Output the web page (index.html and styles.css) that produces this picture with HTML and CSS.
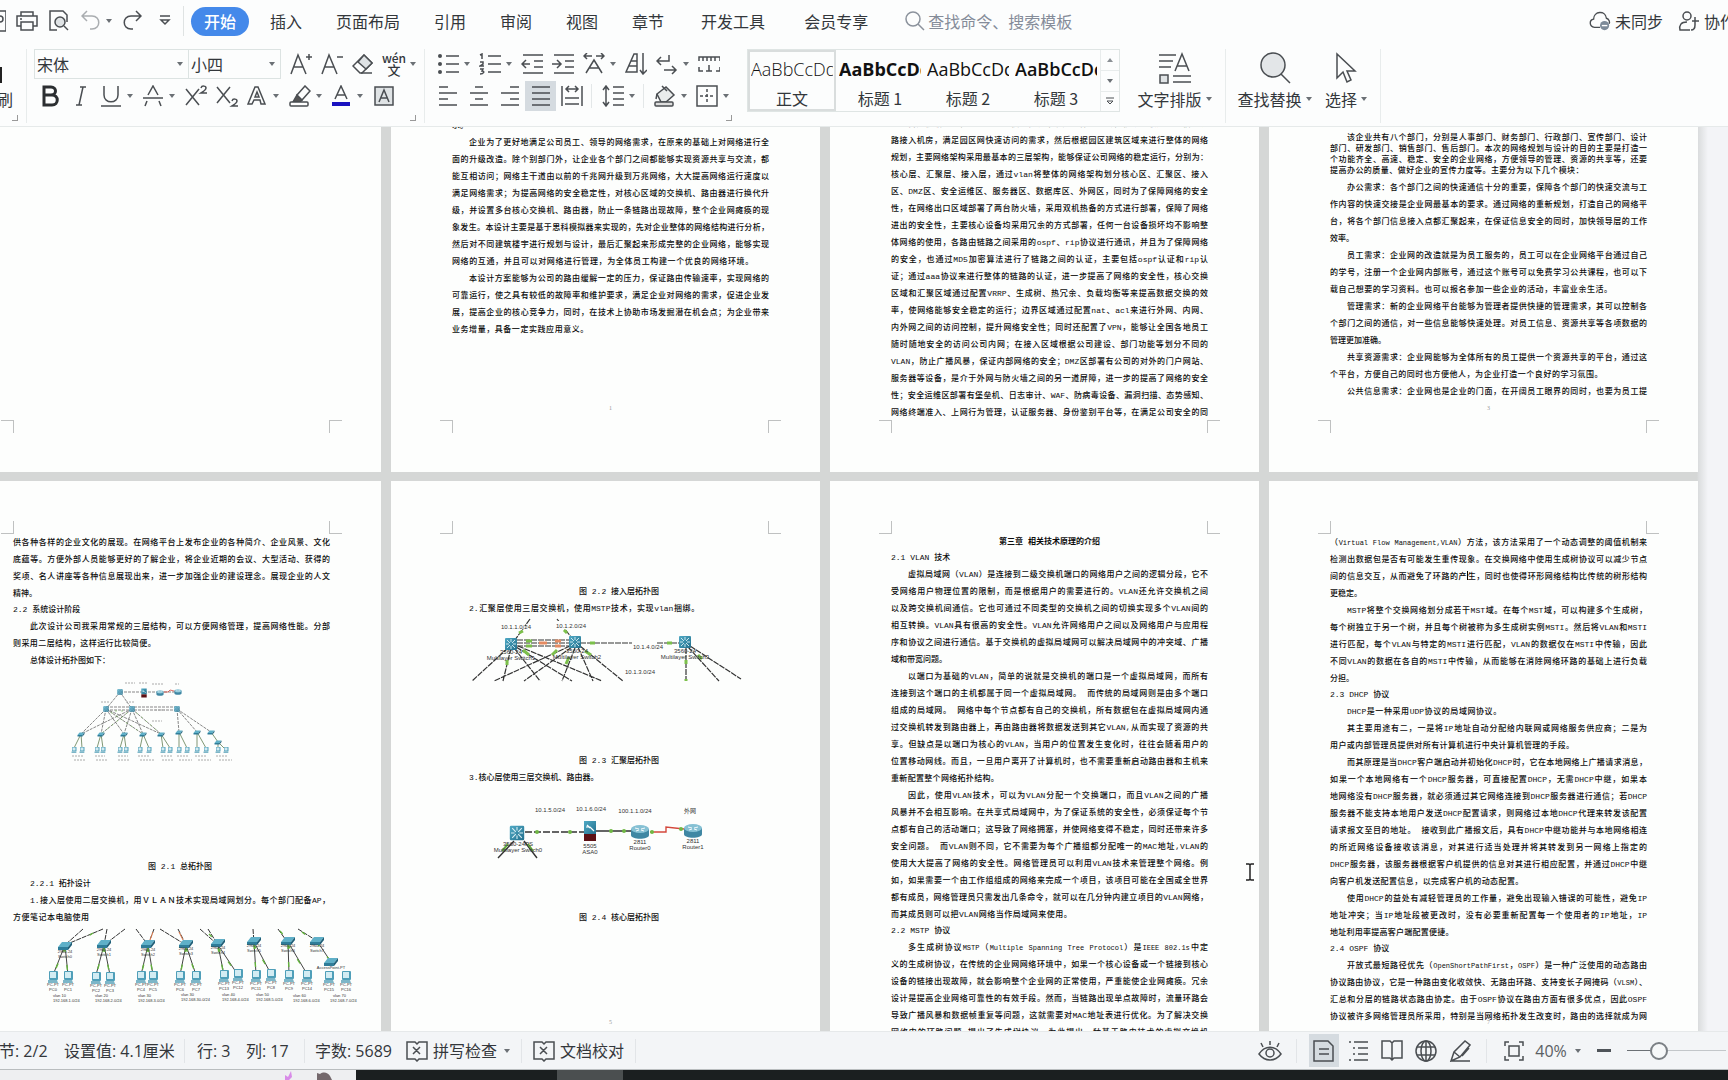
FILE: index.html
```html
<!DOCTYPE html>
<html lang="zh-CN">
<head>
<meta charset="utf-8">
<title>文字文稿</title>
<link rel="stylesheet" href="styles.css">
</head>
<body>
<svg class="defs" aria-hidden="true">
  <defs>
    <linearGradient id="teal" x1="0" y1="0" x2="1" y2="1"><stop offset="0" stop-color="#4fa9c4"/><stop offset="1" stop-color="#24718e"/></linearGradient>
    <g id="mls"><rect x="-6" y="-6" width="12" height="12" rx="1" fill="url(#teal)"/><path d="M-4-4l3 3M4-4l-3 3M-4 4l3-3M4 4l-3-3M0-5v3M0 5v-3M-5 0h3M5 0h-3" stroke="#d9eef4" stroke-width=".9"/></g>
    <g id="sw"><path d="M-7 2l4-5h10l-4 5z" fill="#5fb0c8"/><path d="M-7 2h10v3h-10z" fill="#2f7d99"/><path d="M3 2l4-5v3l-4 5z" fill="#1f5f78"/></g>
    <g id="pc"><rect x="-4" y="-6" width="9" height="9" rx="1" fill="#4f9fb9"/><rect x="-3" y="-5" width="6" height="6" fill="#d3ecf3"/><path d="M-5 3h9l1 3h-10z" fill="#7db6c8"/></g>
    <g id="rt"><path d="M-9-3v6c0 5 18 5 18 0v-6z" fill="#3f87a3"/><ellipse cy="-3" rx="9" ry="4" fill="#86c1d4"/><path d="M-5-4l4 1M5-4l-4 1M-4-1l3-1M4-1l-3-1" stroke="#fff" stroke-width=".9"/></g>
    <g id="fw"><rect x="-6" y="-10" width="12" height="13" fill="url(#teal)"/><rect x="-6" y="3" width="12" height="7" fill="#5c1014"/><path d="M-4-4h4l4 4M-3-6l3 3" stroke="#fff" stroke-width="1.2" fill="none"/></g>
  </defs>
</svg>
<div class="app">
  <header class="tabs">
    <div class="quick">
      <button class="q cut" aria-label="保存"><svg width="8" height="22" viewBox="0 0 8 22"><path d="M0 1h6v20H0M0 6c4 0 4 6 0 6"/></svg></button>
      <button class="q" aria-label="打印"><svg width="22" height="22" viewBox="0 0 22 22"><path d="M5 6V2h12v4M5 16H1V6h20v10h-4M5 12h12v8H5zM4 9h2"/></svg></button>
      <button class="q" aria-label="预览"><svg width="22" height="22" viewBox="0 0 22 22"><path d="M9 20H2V1h13l4 4v7"/><circle cx="12" cy="12" r="5" fill="#dfe3e5"/><path d="M16 16l4 4"/></svg></button>
      <button class="q undo" aria-label="撤销"><svg width="20" height="22" viewBox="0 0 20 22"><path d="M6 1L1 6l5 5M1 6h10c9 0 9 13 0 13h-2"/></svg><i class="caret"></i></button>
      <button class="q redo" aria-label="恢复"><svg width="20" height="22" viewBox="0 0 20 22"><path d="M14 1l5 5-5 5M19 6H9c-9 0-9 13 0 13h2"/></svg></button>
      <button class="q" aria-label="更多"><svg width="12" height="12" viewBox="0 0 12 12"><path d="M1 1h10M2 5h8l-4 4z"/></svg></button>
    </div>
    <nav class="menu">
      <button class="tab on">开始</button><button class="tab">插入</button><button class="tab">页面布局</button><button class="tab">引用</button><button class="tab">审阅</button><button class="tab">视图</button><button class="tab">章节</button><button class="tab wide">开发工具</button><button class="tab wide">会员专享</button>
    </nav>
    <label class="search"><svg width="20" height="20" viewBox="0 0 20 20"><circle cx="8" cy="8" r="7"/><path d="M13 13l6 6"/></svg><input type="text" placeholder="查找命令、搜索模板" aria-label="查找命令"></label>
    <div class="account">
      <button><svg width="22" height="22" viewBox="0 0 24 22"><path d="M12 18H6C0 17 0 10 5 9c0-9 13-10 14-1 3 1 4 4 3 6"/><circle cx="17" cy="16" r="5" fill="#7d8b99" stroke="none"/><path d="M14 16h6" stroke="#fff"/></svg>未同步</button>
      <button><svg width="22" height="20" viewBox="0 0 22 20"><circle cx="9" cy="5" r="4"/><path d="M12 19H2c-1-5 1-8 7-8M14 10h7M17 6v8c0 3-1 5-4 5"/></svg>协作</button>
    </div>
  </header>

  <section class="ribbon">
    <div class="group clip">
      <div class="brush"><span class="stub"></span><span>刷</span></div><i class="launch"></i>
    </div>
    <div class="group font">
      <div class="row">
        <div class="combo">
          <label class="pick face"><select aria-label="字体"><option>宋体</option></select><i class="caret"></i></label>
          <label class="pick size"><select aria-label="字号"><option>小四</option></select><i class="caret"></i></label>
        </div>
        <button class="b" aria-label="增大字号"><svg width="22" height="22" viewBox="0 0 22 22"><path d="M1 21L8 2l8 19M4 14h9M16 4h6M19 1v6"/></svg></button>
        <button class="b" aria-label="减小字号"><svg width="22" height="22" viewBox="0 0 22 22"><path d="M1 21L8 2l8 19M4 14h9M16 4h6"/></svg></button>
        <button class="b" aria-label="清除格式"><svg width="22" height="22" viewBox="0 0 22 22"><path d="M1 13L12 2l8 8-10 10H8z"/><path d="M6 9l8 7 6-6-8-8z" fill="#dfe3e5"/><path d="M9 20h11"/></svg></button>
        <button class="b c wen" aria-label="拼音指南"><span><small>wén</small><b>文</b></span><i class="caret"></i></button>
      </div>
      <div class="row">
        <button class="b" aria-label="加粗"><svg width="20" height="22" viewBox="0 0 20 22"><path class="thick" d="M4 2h7c6 0 6 8 0 8H4zM4 10h8c7 0 7 10 0 10H4z"/></svg></button>
        <button class="b" aria-label="倾斜"><svg width="20" height="22" viewBox="0 0 20 22"><path d="M9 2h6M5 20h6M12 2L8 20"/></svg></button>
        <button class="b c" aria-label="下划线"><svg width="20" height="22" viewBox="0 0 20 22"><path d="M3 1v9c0 9 14 9 14 0V1M0 21h20"/></svg><i class="caret"></i></button>
        <button class="b c" aria-label="删除线"><svg width="20" height="22" viewBox="0 0 20 22"><path d="M5 10l5-9 5 9M0 13h20M4 16l-2 5M16 16l2 5"/></svg><i class="caret"></i></button>
        <button class="b" aria-label="上标"><svg width="22" height="22" viewBox="0 0 22 22"><path d="M1 4l13 16M14 4L1 20M16 3c1-3 5-2 5 0 0 2-5 5-5 5h6"/></svg></button>
        <button class="b" aria-label="下标"><svg width="22" height="22" viewBox="0 0 22 22"><path d="M1 2l13 16M14 2L1 18M16 16c1-3 5-2 5 0 0 2-5 5-5 5h6"/></svg></button>
        <button class="b c" aria-label="文字效果"><svg width="20" height="22" viewBox="0 0 20 22"><path d="M1 19L8 2h3l7 17h-4l-1-4H7l-2 4zM8 12h4l-2-5z"/></svg><i class="caret"></i></button>
        <button class="b c" aria-label="突出显示"><svg width="22" height="22" viewBox="0 0 22 22"><path d="M8 10l8-9 5 5-8 9-5 1z"/><path d="M8 10l5 5-2 2H4z" fill="#555"/><rect x="1" y="17" width="18" height="4" rx="1" fill="#fff"/></svg><i class="caret"></i></button>
        <button class="b c" aria-label="字体颜色"><svg width="20" height="22" viewBox="0 0 20 22"><path d="M4 14l6-13 6 13M6 10h8"/><path d="M1 19h18" stroke="#1a12c0" stroke-width="4"/></svg><i class="caret"></i></button>
        <button class="b" aria-label="字符底纹"><svg width="20" height="22" viewBox="0 0 20 22"><rect x="1" y="2" width="18" height="18" fill="#dfe3e5"/><path d="M5 17l5-12 5 12M7 13h6"/></svg></button>
      </div>
      <i class="launch"></i>
    </div>
    <div class="group para">
      <div class="row">
        <button class="b c" aria-label="项目符号"><svg width="22" height="22" viewBox="0 0 22 22"><path d="M9 3h13M9 11h13M9 19h13"/><g fill="#4a4e52" stroke="none"><circle cx="3" cy="3" r="2"/><circle cx="3" cy="11" r="2"/><circle cx="3" cy="19" r="2"/></g></svg><i class="caret"></i></button>
        <button class="b c" aria-label="编号"><svg width="22" height="22" viewBox="0 0 22 22"><path d="M9 3h13M9 11h13M9 19h13M1 2l2-1v5M1 9h3v2L1 13h4M1 16h3l-1 2c3 0 2 3-2 3"/></svg><i class="caret"></i></button>
        <button class="b" aria-label="减少缩进"><svg width="22" height="22" viewBox="0 0 22 22"><path d="M2 2h20M13 8h9M13 14h9M2 20h20M9 11H1M5 7l-4 4 4 4"/></svg></button>
        <button class="b" aria-label="增加缩进"><svg width="22" height="22" viewBox="0 0 22 22"><path d="M2 2h20M13 8h9M13 14h9M2 20h20M0 11h8M5 7l4 4-4 4"/></svg></button>
        <button class="b c" aria-label="中文版式"><svg width="22" height="22" viewBox="0 0 22 22"><path d="M3 20l8-13 8 13M6 15h10M9 3H1M4 0L1 3l3 3M13 3h8M18 0l3 3-3 3"/></svg><i class="caret"></i></button>
        <button class="b" aria-label="排序"><svg width="22" height="22" viewBox="0 0 22 22"><path d="M1 19L9 1h3v18zM6 8h6M4 13h8M18 0v20M15 17l3 4 4-4"/></svg></button>
        <button class="b c" aria-label="显示标记"><svg width="22" height="22" viewBox="0 0 22 22"><path d="M13 2v6H2M5 4L1 8l4 4M8 17h11M16 13l4 4-4 4"/></svg><i class="caret"></i></button>
        <button class="b" aria-label="制表位"><svg width="22" height="22" viewBox="0 0 22 22"><path d="M1 8V4h21v4M5 4v4M9 4v4M13 4v4M17 4v4M1 14v4h4M22 14v4h-4M11 12v6M8 18h6"/></svg></button>
      </div>
      <div class="row">
        <button class="b" aria-label="左对齐"><svg width="20" height="22" viewBox="0 0 20 22"><path d="M1 2h9M1 8h18M1 14h9M1 20h18"/></svg></button>
        <button class="b" aria-label="居中"><svg width="20" height="22" viewBox="0 0 20 22"><path d="M6 2h8M1 8h18M6 14h8M1 20h18"/></svg></button>
        <button class="b" aria-label="右对齐"><svg width="20" height="22" viewBox="0 0 20 22"><path d="M10 2h9M1 8h18M10 14h9M1 20h18"/></svg></button>
        <button class="b active" aria-label="两端对齐"><svg width="20" height="22" viewBox="0 0 20 22"><path d="M1 2h18M1 8h18M1 14h18M1 20h18"/></svg></button>
        <button class="b" aria-label="分散对齐"><svg width="22" height="22" viewBox="0 0 22 22"><path d="M1 1v20M21 1v20M5 4h12M8 1L5 4l3 3M14 1l3 3-3 3M4 13h14M4 19h14"/></svg></button>
        <i class="bar"></i>
        <button class="b c" aria-label="行距"><svg width="22" height="22" viewBox="0 0 22 22"><path d="M4 1v20M1 5l3-4 3 4M1 17l3 4 3-4M11 2h11M11 8h11M11 14h11M11 20h11"/></svg><i class="caret"></i></button>
        <i class="bar"></i>
        <button class="b c" aria-label="底纹"><svg width="22" height="22" viewBox="0 0 22 22"><path d="M3 9l9-7 8 8-8 7H7z" fill="#e9ecec"/><path d="M8 1l5 5M3 9l-1 5"/><rect x="1" y="17" width="18" height="4" rx="1" fill="#ddd"/></svg><i class="caret"></i></button>
        <button class="b c" aria-label="边框"><svg width="22" height="22" viewBox="0 0 22 22"><rect x="1" y="1" width="20" height="20"/><path d="M11 4v14M4 11h14" stroke-dasharray="3 2"/></svg><i class="caret"></i></button>
      </div>
      <i class="launch"></i>
    </div>
    <div class="gallery">
      <button class="style sel"><span class="s0">AaBbCcDd</span><em>正文</em></button>
      <button class="style"><span class="s1">AaBbCcDd</span><em>标题 1</em></button>
      <button class="style"><span class="s2">AaBbCcDd</span><em>标题 2</em></button>
      <button class="style"><span class="s3">AaBbCcDd</span><em>标题 3</em></button>
      <div class="scroll"><button aria-label="上一行"><i class="caret up"></i></button><button aria-label="下一行"><i class="caret"></i></button><button aria-label="更多样式"><svg width="8" height="8" viewBox="0 0 8 8"><path d="M0 1h8M1 4h6L4 7z"/></svg></button></div>
    </div>
    <div class="group big">
      <button><svg width="32" height="32" viewBox="0 0 32 32"><path d="M0 3h17M0 9h14M0 15h12M16 19L23 2l7 17M18 14h10M14 24h18M14 30h18"/><rect x="1" y="23" width="8" height="8" fill="#dfe3e5"/></svg><span>文字排版<i class="caret"></i></span></button>
    </div>
    <div class="group big">
      <button><svg width="32" height="32" viewBox="0 0 32 32"><circle cx="14" cy="13" r="12" fill="#e3e6e8"/><path d="M22 22l9 9"/></svg><span>查找替换<i class="caret"></i></span></button>
      <button class="narrow"><svg width="22" height="32" viewBox="0 0 22 32"><path d="M2 2v24l6-6 4 10 4-2-4-9h8z"/></svg><span>选择<i class="caret"></i></span></button>
    </div>
  </section>

  <main class="canvas">
    <article class="page upper first"><i class="mark l b0"></i><i class="mark r b0"></i></article>

    <article class="page upper">
      <div class="text"><p class="one">求。</p>
<p class="in">企业为了更好地满足公司员工、领导的网络需求，在原来的基础上对网络进行全
面的升级改造。除个别部门外，让企业各个部门之间都能够实现资源共享与交流，都
能互相访问；网络主干道由以前的千兆网升级到万兆网络，大大提高网络运行速度以
满足网络需求；为提高网络的安全稳定性，对核心区域的交换机、路由器进行换代升
级，并设置多台核心交换机、路由器，防止一条链路出现故障，整个企业网瘫痪的现
象发生。本设计主要是基于思科模拟器来实现的，先对企业整体的网络结构进行分析，
然后对不同建筑楼宇进行规划与设计，最后汇聚起来形成完整的企业网络，能够实现
<span class="end w95">网络的互通，并且可以对网络进行管理，为全体员工构建一个优良的网络环境。</span></p>
<p class="in">本设计方案能够为公司的路由缓解一定的压力，保证路由传输速率，实现网络的
可靠运行，使之具有较低的故障率和维护要求，满足企业对网络的需求，促进企业发
展，提高企业的核心竞争力，同时，在技术上协助市场发掘潜在机会点；为企业带来
<span class="end w43">业务增量，具备一定实践应用意义。</span></p></div>
      <div class="foot tall"><span>1</span></div><i class="mark l b0"></i><i class="mark r b0"></i>
    </article>

    <article class="page upper">
      <div class="text"><p class="in">首先根据公司各区域机房的使用情况来确定整体的布局，移动、联通、电信三链
路接入机房，满足园区网快速访问的需求，然后根据园区建筑区域来进行整体的网络
规划，主要网络架构采用最基本的三层架构，能够保证公司网络的稳定运行，分别为：
核心层、汇聚层、接入层，通过vlan将整体的网络架构划分核心区、汇聚区、接入
区、DMZ区、安全运维区、服务器区、数据库区、外网区，同时为了保障网络的安全
性，在网络出口区域部署了两台防火墙，采用双机热备的方式进行部署，保障了网络
进出的安全性，主要核心设备均采用冗余的方式部署，任何一台设备损坏均不影响整
体网络的使用，各路由链路之间采用的ospf、rip协议进行通讯，并且为了保障网络
的安全，也通过MD5加密算法进行了链路之间的认证，主要包括ospf认证和rip认
证；通过aaa协议来进行整体的链路的认证，进一步提高了网络的安全性，核心交换
区域和汇聚区域通过配置VRRP、生成树、热冗余、负载均衡等来提高数据交换的效
率，使网络能够安全稳定的运行；边界区域通过配置nat、acl来进行外网、内网、
内外网之间的访问控制，提升网络安全性；同时还配置了VPN，能够让全国各地员工
随时随地安全的访问公司内网；在接入区域根据公司建设、部门功能等划分不同的
VLAN，防止广播风暴，保证内部网络的安全；DMZ区部署有公司的对外的门户网站、
服务器等设备，是介于外网与防火墙之间的另一道屏障，进一步的提高了网络的安全
性；安全运维区部署有堡垒机、日志审计、WAF、防病毒设备、漏洞扫描、态势感知、
网络终端准入、上网行为管理，认证服务器、身份鉴别平台等，在满足公司安全的同</p></div>
      <i class="mark l b0"></i><i class="mark r b0"></i>
    </article>

    <article class="page upper">
      <div class="text"><p class="one">的目的。</p>
<p class="in tight">该企业共有八个部门，分别是人事部门、财务部门、行政部门、宣传部门、设计
部门、研发部门、销售部门、售后部门。本次的网络规划与设计的目的主要是打造一
个功能齐全、高速、稳定、安全的企业网络，方便领导的管理、资源的共享等，还要
<span class="end w80">提高办公的质量、做好企业的宣传力度等。主要分为以下几个模块：</span></p>
<p class="in">办公需求：各个部门之间的快速通信十分的重要，保障各个部门的快速交流与工
作内容的快速交接是企业网最基本的要求。通过网络的重新规划，打造自己的网络平
台，将各个部门信息接入点都汇聚起来，在保证信息安全的同时，加快领导层的工作
<span class="end">效率。</span></p>
<p class="in">员工需求：企业网的改造就是为员工服务的，员工可以在企业网络平台通过自己
的学号，注册一个企业网内部账号，通过这个账号可以免费学习公共课程，也可以下
<span class="end w89">载自己想要的学习资料。也可以报名参加一些企业的活动，丰富业余生活。</span></p>
<p class="in">管理需求：新的企业网络平台能够为管理者提供快捷的管理需求，其可以控制各
个部门之间的通信，对一些信息能够快速处理。对员工信息、资源共享等各项数据的
<span class="end">管理更加准确。</span></p>
<p class="in">共享资源需求：企业网能够为全体所有的员工提供一个资源共享的平台，通过这
<span class="end w86">个平台，方便自己的同时也方便他人，为企业打造一个良好的学习氛围。</span></p>
<p class="in">公共信息需求：企业网也是企业的门面，在开阔员工眼界的同时，也要为员工提</p></div>
      <div class="foot"><span>3</span></div><i class="mark l b0"></i><i class="mark r b0"></i>
    </article>

    <article class="page lower first">
      <div class="text"><p>供各种各样的企业文化的展现。在网络平台上发布企业的各种简介、企业风景、文化
底蕴等。方便外部人员能够更好的了解企业，将企业近期的会议、大型活动、获得的
奖项、名人讲座等各种信息展现出来，进一步加强企业的建设理念。展现企业的人文
<span class="end">精神。</span></p>
<h3>2.2 系统设计阶段</h3>
<p class="in">此次设计公司我采用常规的三层结构，可以方便网络管理，提高网络性能。分部
<span class="end w45">则采用二层结构，这样运行比较简便。</span></p>
<p class="in one">总体设计拓扑图如下：</p></div>
      <svg class="fig" width="317" height="189" viewBox="13 669 317 189">
        <g stroke="#555" stroke-width=".7" fill="none" stroke-dasharray="3 1">
          <path d="M120 692h58M120 692l-14 17M120 692l12 17M106 707h71M106 710h71"/>
          <path d="M106 709L81 734M106 709l-5 25M106 709l37 25M106 709l55 25M132 709L81 734M132 709l-31 25M132 709l-8 25M132 709l11 25M132 709l29 25M106 709l18 25M177 709l2 23M177 709l20 23M177 709l34 23"/>
        </g>
        <path d="M106 709l37 25M132 709l-31 25M132 709l29 25M115 711h12" stroke="#6db04c" stroke-width=".6" stroke-dasharray="2 4"/>
        <path d="M160 692h8l2-2 8 2" stroke="#d4483c" fill="none" stroke-width=".8"/>
        <g stroke="#4b6b3a" stroke-width=".7"><path d="M81 734l-7 14M81 734l1 14M101 734l-4 14M101 734l2 14M124 734l-4 14M124 734l2 14M143 734l-3 14M143 734l6 14M161 734l2 14M161 734l9 14M179 732v16M179 732l8 16M197 732v16M197 732l9 16M211 732l7 10v8M218 742l8 8"/></g>
        <g class="mini">
          <use href="#mls" transform="translate(120 692) scale(.45)"/><use href="#fw" transform="translate(144 693) scale(.45)"/><use href="#rt" transform="translate(160 693) scale(.4)"/><use href="#rt" transform="translate(178 692) scale(.4)"/>
          <use href="#mls" transform="translate(106 709) scale(.45)"/><use href="#mls" transform="translate(132 709) scale(.45)"/><use href="#mls" transform="translate(177 709) scale(.45)"/>
          <use href="#sw" transform="translate(81 734) scale(.5)"/><use href="#sw" transform="translate(101 734) scale(.5)"/><use href="#sw" transform="translate(124 734) scale(.5)"/><use href="#sw" transform="translate(143 734) scale(.5)"/><use href="#sw" transform="translate(161 734) scale(.5)"/><use href="#sw" transform="translate(179 732) scale(.5)"/><use href="#sw" transform="translate(197 732) scale(.5)"/><use href="#sw" transform="translate(211 732) scale(.5)"/><use href="#sw" transform="translate(218 742) scale(.5)"/>
          <use href="#pc" transform="translate(74 750) scale(.5)"/><use href="#pc" transform="translate(82 750) scale(.5)"/><use href="#pc" transform="translate(97 750) scale(.5)"/><use href="#pc" transform="translate(103 750) scale(.5)"/><use href="#pc" transform="translate(120 750) scale(.5)"/><use href="#pc" transform="translate(126 750) scale(.5)"/><use href="#pc" transform="translate(140 750) scale(.5)"/><use href="#pc" transform="translate(149 750) scale(.5)"/><use href="#pc" transform="translate(163 750) scale(.5)"/><use href="#pc" transform="translate(170 750) scale(.5)"/><use href="#pc" transform="translate(179 750) scale(.5)"/><use href="#pc" transform="translate(187 750) scale(.5)"/><use href="#pc" transform="translate(197 750) scale(.5)"/><use href="#pc" transform="translate(206 750) scale(.5)"/><use href="#pc" transform="translate(218 750) scale(.5)"/><use href="#pc" transform="translate(226 750) scale(.5)"/>
        </g>
        <path d="M125 683h10M139 683h9M152 684h12M175 684h4M101 702h9M126 702h8M155 710h10M152 721h10M72 756h12M95 756h10M118 756h10M138 756h12M161 756h11M177 756h12M195 756h12M216 756h12M74 760h12M96 760h12M118 760h12M140 760h14M162 760h12M179 760h13M198 760h13M219 760h13" stroke="#aaa" stroke-width="1" stroke-dasharray="2 1"/>
      </svg>
      <div class="text"><p class="cap">图 2.1 总拓扑图</p>
<p class="in one">2.2.1 拓扑设计</p>
<p class="in">1.接入层使用二层交换机，用ＶＬＡＮ技术实现局域网划分。每个部门配备AP，
<span class="end w24">方便笔记本电脑使用</span></p></div>
      <svg class="fig" width="345" height="88" viewBox="13 926 345 88">
        <g stroke="#333" stroke-width="1" stroke-dasharray="5 1">
          <path d="M83 929L65 945M103 929L65 945M107 929l-3 16M125 929l-21 16M136 929l12 16M154 929l-6 16M160 929l26 16M178 929l8 16M200 929l18 16M208 929l10 16M253 929l1 14M278 929l10 14M298 929l19 12"/>
        </g>
        <path d="M153 932l-3 8M179 932l4 8" stroke="#e07b4c" stroke-width="1"/>
        <g stroke="#444" stroke-width="1"><path d="M65 945l-12 30M65 945l3 30M104 945l-8 30M104 945l6 30M148 945l-7 30M148 945l5 30M186 945l-6 30M186 945l10 30M218 945l6 30M218 945l20 30M254 942l2 32M254 942l17 32M288 942l1 32M288 942l19 32M317 941l14 21"/></g>
        <g stroke="#62b23c" stroke-width="1.4" stroke-dasharray="4 13 5 40"><path d="M65 948l-12 27M65 948l3 27M104 948l-8 27M104 948l6 27M148 948l-7 27M148 948l5 27M186 948l-6 27M186 948l10 27M218 948l6 27M218 948l20 27M254 945l2 29M254 945l17 29M288 945l1 29M288 945l19 29M317 943l14 19M93 933l-12 8M209 934l6 6M280 931l6 7M302 932l8 6"/></g>
        <use href="#sw" x="65" y="945"/><use href="#sw" x="104" y="943"/><use href="#sw" x="148" y="943"/><use href="#sw" x="186" y="943"/><use href="#sw" x="218" y="942"/><use href="#sw" x="254" y="940"/><use href="#sw" x="288" y="940"/><use href="#sw" x="317" y="940"/><use href="#sw" x="331" y="961"/>
        <use href="#pc" x="53" y="977"/><use href="#pc" x="68" y="977"/><use href="#pc" x="96" y="978"/><use href="#pc" x="110" y="978"/><use href="#pc" x="141" y="977"/><use href="#pc" x="153" y="977"/><use href="#pc" x="180" y="977"/><use href="#pc" x="196" y="977"/><use href="#pc" x="224" y="976"/><use href="#pc" x="238" y="975"/><use href="#pc" x="256" y="976"/><use href="#pc" x="271" y="975"/><use href="#pc" x="289" y="976"/><use href="#pc" x="307" y="976"/><use href="#pc" x="329" y="977"/><use href="#pc" x="346" y="977"/>
        <g class="lbl l4" text-anchor="middle">
          <text x="65" y="953">2960-24</text><text x="65" y="958">Switch0</text><text x="104" y="951">2960-24</text><text x="104" y="956">Switch1</text><text x="148" y="951">2960-24</text><text x="148" y="956">Switch2</text><text x="186" y="950">2960-24</text><text x="186" y="955">Switch3</text><text x="218" y="949">2960-24</text><text x="218" y="954">Switch4</text><text x="254" y="947">2960-24</text><text x="254" y="952">Switch5</text><text x="288" y="947">2960-24</text><text x="288" y="952">Switch6</text><text x="317" y="947">2960-24</text><text x="317" y="952">Switch7</text><text x="331" y="969">AccessPoint-PT</text>
          <text x="53" y="986">PC-PT</text><text x="53" y="991">PC0</text><text x="68" y="986">PC-PT</text><text x="68" y="991">PC1</text><text x="96" y="987">PC-PT</text><text x="96" y="992">PC2</text><text x="110" y="987">PC-PT</text><text x="110" y="992">PC3</text><text x="141" y="986">PC-PT</text><text x="141" y="991">PC4</text><text x="153" y="986">PC-PT</text><text x="153" y="991">PC5</text><text x="180" y="986">PC-PT</text><text x="180" y="991">PC6</text><text x="196" y="986">PC-PT</text><text x="196" y="991">PC7</text><text x="224" y="985">PC-PT</text><text x="224" y="990">PC13</text><text x="238" y="984">PC-PT</text><text x="238" y="989">PC12</text><text x="256" y="985">PC-PT</text><text x="256" y="990">PC11</text><text x="271" y="984">PC-PT</text><text x="271" y="989">PC8</text><text x="289" y="985">PC-PT</text><text x="289" y="990">PC9</text><text x="307" y="985">PC-PT</text><text x="307" y="990">PC14</text><text x="329" y="986">PC-PT</text><text x="329" y="991">PC15</text><text x="346" y="986">PC-PT</text><text x="346" y="991">PC16</text>
        </g>
        <g class="lbl l4"><text x="53" y="997">vlan 10</text><text x="53" y="1002">192.168.1.0/24</text><text x="95" y="997">vlan 20</text><text x="95" y="1002">192.168.2.0/24</text><text x="138" y="997">vlan 30</text><text x="138" y="1002">192.168.3.0/24</text><text x="181" y="996">vlan 30</text><text x="181" y="1001">192.168.30.0/24</text><text x="222" y="996">vlan 40</text><text x="222" y="1001">192.168.4.0/24</text><text x="256" y="996">vlan 50</text><text x="256" y="1001">192.168.5.0/24</text><text x="293" y="997">vlan 60</text><text x="293" y="1002">192.168.6.0/24</text><text x="333" y="997">vlan 70</text><text x="330" y="1002">192.168.7.0/24</text></g>
      </svg>
      <i class="mark l t0"></i><i class="mark r t0"></i>
    </article>

    <article class="page lower">
      <div class="text push"><p class="cap">图 2.2 接入层拓扑图</p>
<p class="in l78">2.汇聚层使用三层交换机，使用MSTP技术，实现vlan捆绑。</p></div>
      <svg class="fig" width="316" height="135" viewBox="452 617 316 135">
        <g stroke="#333" stroke-width="1.2" stroke-dasharray="6 1">
          <path d="M530 619l-18 25M557 619l18 23M517 640h52M517 643h52M517 646h52M580 643h105"/>
          <path d="M508 648l-36 33M511 648l-8 33M514 648l26 33M516 647l56 34M518 646l84 35M570 646l-76 35M572 647l-48 34M575 648l-13 33M578 647l15 34M580 646l43 35M686 648v33M688 647l31 34M690 646l51 33"/>
        </g>
        <g stroke="#7cc04b" stroke-width="3"><path d="M519 633l4-2M564 630l3 3M526 641h6M526 646h6M590 643h5M667 643h5M523 650l6 5M507 660v5M557 650l-5 5M591 655l-6-4M569 657l-3 7M686 660v4M698 655l4 4M686 679v2"/></g>
        <path d="M555 641h6M555 646h6M539 643h8" stroke="#e58b62" stroke-width="3"/>
        <rect x="501" y="622" width="24" height="7" fill="#fdfefd"/><rect x="556" y="621" width="24" height="8" fill="#fdfefd"/><rect x="632" y="640" width="24" height="10" fill="#fdfefd"/>
        <use href="#mls" x="511" y="644"/><use href="#mls" x="575" y="642"/><use href="#mls" x="685" y="642"/>
        <g class="lbl l6"><text x="501" y="629">10.1.1.0/24</text><text x="556" y="628">10.1.2.0/24</text><text x="633" y="649">10.1.4.0/24</text><text x="625" y="674">10.1.3.0/24</text></g>
        <g class="lbl l6" text-anchor="middle"><text x="511" y="654">3560-24</text><text x="511" y="660">Multilayer Switch1</text><text x="577" y="653">3560-24</text><text x="577" y="659">Multilayer Switch2</text><text x="685" y="653">3560-24</text><text x="685" y="659">Multilayer Switch3</text></g>
      </svg>
      <div class="text"><p class="cap">图 2.3 汇聚层拓扑图</p>
<p class="in one">3.核心层使用三层交换机、路由器。</p></div>
      <svg class="fig" width="316" height="123" viewBox="452 785 316 123">
        <g stroke="#333" stroke-width="1.4" fill="none"><path d="M525 831h59" stroke-dasharray="7 2"/><path d="M596 830h36M514 840l-16 17M524 840l13 17"/></g>
        <path d="M508 843l-6 7M528 843l5 7" stroke="#62a83c" stroke-width="2"/>
        <path d="M650 831h16v-5l18 2" stroke="#d4483c" stroke-width="1.4" fill="none"/>
        <g fill="#6fb744"><circle cx="537" cy="831" r="2"/><circle cx="570" cy="831" r="2"/><circle cx="611" cy="830" r="2"/><circle cx="624" cy="830" r="2"/><circle cx="652" cy="831" r="2"/><circle cx="681" cy="828" r="2"/></g>
        <use href="#mls" transform="translate(517 832) scale(1.2)"/><use href="#fw" x="590" y="830"/><use href="#rt" x="640" y="831"/><use href="#rt" x="693" y="830"/>
        <g class="lbl l6" text-anchor="middle"><text x="550" y="811">10.1.5.0/24</text><text x="591" y="810">10.1.6.0/24</text><text x="635" y="812">100.1.1.0/24</text><text x="690" y="812">外网</text><text x="518" y="845">3560-24PS</text><text x="518" y="851">Multilayer Switch0</text><text x="590" y="847">5505</text><text x="590" y="853">ASA0</text><text x="640" y="843">2811</text><text x="640" y="849">Router0</text><text x="693" y="842">2811</text><text x="693" y="848">Router1</text></g>
      </svg>
      <div class="text"><p class="cap">图 2.4 核心层拓扑图</p></div>
      <div class="foot last"><span>5</span></div><i class="mark l t0"></i><i class="mark r t0"></i>
    </article>

    <article class="page lower">
      <div class="text"><h2>第三章 相关技术原理的介绍</h2>
<h3>2.1 VLAN 技术</h3>
<p class="in">虚拟局域网（VLAN）是连接到二级交换机端口的网络用户之间的逻辑分段，它不
受网络用户物理位置的限制，而是根据用户的需要进行的。VLAN还允许交换机之间
以及跨交换机间通信。它也可通过不同类型的交换机之间的切换实现多个VLAN间的
相互转换。VLAN具有很高的安全性。VLAN允许网络用户之间以及网络用户与应用程
序和协议之间进行通信。基于交换机的虚拟局域网可以解决局域网中的冲突域、广播
<span class="end">域和带宽问题。</span></p>
<p class="in">以端口为基础的VLAN，简单的说就是交换机的端口是一个虚拟局域网，而所有
连接到这个端口的主机都属于同一个虚拟局域网。 而传统的局域网则是由多个端口
组成的局域网。 网络中每个节点都有自己的交换机，所有数据包在虚拟局域网内通
过交换机转发到路由器上，再由路由器将数据发送到其它VLAN,从而实现了资源的共
享。但缺点是以端口为核心的VLAN，当用户的位置发生变化时，往往会随着用户的
位置移动网线。而且，一旦用户离开了计算机时，也不需要重新启动路由器和主机来
<span class="end w34">重新配置整个网络拓扑结构。</span></p>
<p class="in">因此，使用VLAN技术，可以为VLAN分配一个交换端口，而且VLAN之间的广播
风暴并不会相互影响。在共享式局域网中，为了保证系统的安全性，必须保证每个节
点都有自己的活动端口；这导致了网络拥塞，并使网络变得不稳定，同时还带来许多
安全问题。 而VLAN则不同，它不需要为每个广播组都分配唯一的MAC地址,VLAN的
使用大大提高了网络的安全性。网络管理员可以利用VLAN技术来管理整个网络。例
如，如果需要一个由工作组组成的网络来完成一个项目，该项目可能在全国或全世界
都有成员，网络管理员只需发出几条命令，就可以在几分钟内建立项目的VLAN网络，
<span class="end w57">而其成员则可以把VLAN网络当作局域网来使用。</span></p>
<h3>2.2 MSTP 协议</h3>
<p class="in">多生成树协议<span class="en">MSTP</span>（<span class="en">Multiple Spanning Tree Protocol</span>）是<span class="en">IEEE 802.1s</span>中定
义的生成树协议，在传统的企业网网络环境中，如果一个核心设备或一个链接到核心
设备的链接出现故障，就会影响整个企业网的正常使用，严重能使企业网瘫痪。冗余
设计是提高企业网络可靠性的有效手段。然而，当链路出现单点故障时，流量环路会
导致广播风暴和数据帧重复等问题，这就需要对MAC地址表进行优化。为了解决交换
网络中的环路问题,提出了生成树协议。为此提出一种基于路由技术的虚拟交换机</p></div>
      <i class="mark l t0"></i><i class="mark r t0"></i>
    </article>

    <article class="page lower">
      <div class="text"><p>（<span class="en">Virtual Flow Management,VLAN</span>）方法，该方法采用了一个动态调整的阈值机制来
检测出数据包是否有可能发生重传现象。在交换网络中使用生成树协议可以减少节点
间的信息交互，从而避免了环路的产<i class="cursor"></i>生，同时也使得环形网络结构比传统的树形结构
<span class="end">更稳定。</span></p>
<p class="in">MSTP将整个交换网络划分成若干MST域。在每个MST域，可以构建多个生成树，
每个树独立于另一个树，并且每个树被称为多生成树实例MSTI。然后将VLAN和MSTI
进行匹配，每个VLAN与特定的MSTI进行匹配，VLAN的数据仅在MSTI中传输，因此
不同VLAN的数据在各自的MSTI中传输，从而能够在消除网络环路的基础上进行负载
<span class="end">分担。</span></p>
<h3>2.3 DHCP 协议</h3>
<p class="in l54">DHCP是一种采用UDP协议的局域网协议。</p>
<p class="in">其主要用途有二，一是将IP地址自动分配给内联网或网络服务供应商；二是为
<span class="end w77">用户或内部管理员提供对所有计算机进行中央计算机管理的手段。</span></p>
<p class="in">而其原理是当DHCP客户端启动并初始化DHCP时，它在本地网络上广播请求消息，
如果一个本地网络有一个DHCP服务器，可直接配置DHCP，无需DHCP中继，如果本
地网络没有DHCP服务器，就必须通过其它网络连接到DHCP服务器进行通信；若DHCP
服务器不能支持本地用户发送DHCP配置请求，则网络过本地DHCP代理来转发该配置
请求报文至目的地址。 接收到此广播报文后，具有DHCP中继功能并与本地网络相连
的所近网络设备接收该消息，对其进行适当处理并将其转发到另一网络上指定的
DHCP服务器，该服务器根据客户机提供的信息对其进行相应配置，并通过DHCP中继
<span class="end w61">向客户机发送配置信息，以完成客户机的动态配置。</span></p>
<p class="in">使用DHCP的益处有减轻管理员的工作量，避免出现输入错误的可能性，避免IP
地址冲突；当IP地址段被更改时，没有必要重新配置每一个使用者的IP地址，IP
<span class="end w39">地址利用率提高客户端配置便捷。</span></p>
<h3>2.4 OSPF 协议</h3>
<p class="in">开放式最短路径优先（<span class="en">OpenShortPathFirst</span>，<span class="en">OSPF</span>）是一种广泛使用的动态路由
协议路由协议，它是一种路由变化收敛快、无路由环路、支持变长子网掩码（<span class="en">VLSM</span>）、
汇总和分层的链路状态路由协定。由于OSPF协议在路由方面有很多优点，因此OSPF
协议被许多网络管理员所采用，特别是当网络拓扑发生改变时，路由的选择就成为网</p></div>
      <div class="foot last"><span>7</span></div><i class="mark l t0"></i><i class="mark r t0"></i>
    </article>
    <svg class="pointer" width="10" height="18" viewBox="0 0 10 18"><path d="M1 1h3l1 1 1-1h3M1 17h3l1-1 1 1h3M5 2v14" stroke="#222" fill="none"/></svg>
  </main>

  <footer class="status">
    <div class="left">
      <span class="sec">节: 2/2</span><span class="set">设置值: 4.1厘米</span><i class="bar"></i>
      <span class="ln">行: 3</span><span class="col">列: 17</span><i class="bar"></i>
      <span class="cnt">字数: 5689</span>
      <button><svg width="22" height="22" viewBox="0 0 22 22"><path d="M1 2h8l2 2 2-2h8v17h-8l-2 2-2-2H1zM7 7l7 7M14 7l-7 7"/></svg>拼写检查<i class="caret"></i></button><i class="bar"></i>
      <button><svg width="22" height="22" viewBox="0 0 22 22"><path d="M1 2h8l2 2 2-2h8v17h-8l-2 2-2-2H1zM7 7l7 7M14 7l-7 7"/></svg>文档校对</button><i class="bar"></i>
    </div>
    <div class="right">
      <button class="v" aria-label="护眼模式"><svg width="24" height="22" viewBox="0 0 24 22"><path d="M1 14c6-9 16-9 22 0-6 8-16 8-22 0zM12 1v4M3 3l2 4M21 3l-2 4"/><circle cx="12" cy="13" r="4"/></svg></button><i class="bar"></i>
      <button class="v active" aria-label="页面视图"><svg width="22" height="22" viewBox="0 0 22 22"><path d="M1 1h14l5 5v15H1zM6 9h10M6 14h10"/></svg></button>
      <button class="v" aria-label="大纲"><svg width="22" height="22" viewBox="0 0 22 22"><path d="M2 2h2M7 2h14M6 8h2M11 8h10M6 14h2M11 14h10M2 20h2M7 20h14"/></svg></button>
      <button class="v" aria-label="阅读版式"><svg width="22" height="22" viewBox="0 0 22 22"><path d="M1 1h8l2 2 2-2h8v17h-8l-2 2-2-2H1zM11 3v16"/></svg></button>
      <button class="v" aria-label="Web 版式"><svg width="22" height="22" viewBox="0 0 22 22"><circle cx="11" cy="11" r="10"/><ellipse cx="11" cy="11" rx="5" ry="10"/><path d="M11 1v20M2 7h18M2 15h18"/></svg></button>
      <button class="v" aria-label="写作模式"><svg width="22" height="22" viewBox="0 0 22 22"><path d="M2 21l3-9L16 1l5 4-10 12zM5 12l6 5M13 16l7-8M2 21h19"/></svg></button><i class="bar"></i>
      <button class="v fit" aria-label="最佳缩放"><svg width="20" height="20" viewBox="0 0 20 20"><path d="M1 5V1h4M15 1h4v4M19 15v4h-4M5 19H1v-4"/><rect x="5" y="5" width="10" height="10"/></svg></button>
      <button class="pct">40%<i class="caret"></i></button>
      <button class="minus" aria-label="缩小"></button>
      <div class="zoom"><input type="range" min="0" max="100" value="14" aria-label="缩放"></div>
    </div>
  </footer>
  <div class="taskbar"><div class="lite"><svg width="60" height="10" viewBox="0 0 60 10"><path d="M6 10V5l3 2 3-6 1 6-3 3z" fill="#d88be8"/><path d="M38 10V3l3 1c4-3 8-1 10 2l2 4z" fill="#74686c"/></svg></div><div class="task"></div></div>
</div>
</body>
</html>
```
FILE: styles.css
```css
* { box-sizing: border-box; }
body { margin: 0; background: #fcfdfd; color: #33373b; font: 16px/20px "Noto Sans CJK SC", sans-serif; overflow: hidden; }
button { border: 0; padding: 0; margin: 0; background: none; font: inherit; color: inherit; display: flex; align-items: center; justify-content: center; white-space: nowrap; flex: none; }
svg { flex: none; display: block; fill: none; stroke: #4a4e52; stroke-width: 1.5; }
i { font-style: normal; }
.defs { position: absolute; width: 0; height: 0; }
.app { height: 100vh; display: flex; flex-direction: column; }
.caret { display: inline-block; width: 0; height: 0; border: 3px solid transparent; border-top: 4px solid #6b7075; border-bottom: 0; flex: none; }
.caret.up { border-top: 0; border-bottom: 4px solid #8b9095; }
.bar { width: 1px; background: #e3e7e8; flex: none; }

/* title row */
.tabs { height: 44px; padding-bottom: 2px; display: flex; align-items: center; flex: none; position: relative; }
.quick { width: 184px; height: 30px; display: flex; align-items: center; gap: 10px; border-right: 1px solid #dfe3e3; flex: none; }
.cut { width: 6px; justify-content: flex-start; overflow: hidden; }
.undo { gap: 5px; margin-left: 1px; }
.undo svg { stroke: #a9adb0; }
.redo { margin-right: 7px; }
.menu { display: flex; align-items: center; margin-left: 3px; }
.tab { height: 29px; padding: 0 17px; }
.tab.wide { padding: 0 19px; margin-left: 1px; }
.tab.on { padding: 0 13px; margin: 0 4px; border-radius: 15px; background: #4489ea; color: #fff; font-weight: 500; }
.search { display: flex; align-items: center; gap: 3px; margin-left: 18px; }
.search svg { stroke: #8b929c; }
.search input { width: 160px; border: 0; padding: 0; background: none; font: inherit; }
.search input::placeholder { color: #858c99; opacity: 1; }
.account { position: absolute; left: calc(100% - 139px); display: flex; gap: 15px; }
.account button { gap: 4px; }

/* ribbon */
.ribbon { height: 83px; display: flex; padding-top: 5px; flex: none; border-bottom: 1px solid #e6eaea; }
.group { display: flex; flex-direction: column; gap: 2px; height: 74px; border-right: 1px solid #e8ecec; position: relative; flex: none; }
.clip { width: 27px; }
.brush { display: flex; flex-direction: column; padding-top: 18px; gap: 6px; margin-left: -3px; }
.stub { width: 5px; height: 16px; background: #222; }
.launch { position: absolute; right: 8px; bottom: 2px; width: 6px; height: 6px; border: solid #999; border-width: 0 1px 1px 0; }
.row { display: flex; height: 30px; align-items: center; }
.font { width: 398px; padding-left: 7px; }
.para { width: 315px; padding-left: 7px; border-right: 0; }
.combo { display: flex; height: 30px; margin-right: 4px; border: 1px solid #dce3e2; flex: none; }
.pick { display: grid; align-items: center; }
.pick select, .pick .caret { grid-area: 1 / 1; }
.pick .caret { justify-self: end; margin-right: 5px; pointer-events: none; }
.pick select { appearance: none; border: 0; background: none; font: inherit; color: inherit; padding: 0 2px; width: 100%; height: 28px; }
.face { width: 154px; border-right: 1px solid #dce3e2; }
.size { width: 91px; }
.b { width: 31px; height: 30px; }
.b.c { width: 42px; padding-left: 5px; justify-content: flex-start; }
.b.c .caret { margin: 0 auto; }
.b .thick { stroke-width: 3; stroke: #2b2e31; }
.active { background: #d5dbe0; }
.row .bar { height: 24px; margin: 0 5px 0 4px; }
.wen span { display: flex; flex-direction: column; align-items: center; width: 22px; }
.wen small { font-size: 12px; line-height: 10px; font-weight: 500; }
.wen b { font-size: 13px; line-height: 13px; font-weight: 500; }
.gallery { display: flex; height: 63px; width: 373px; border: 1px solid #dfe5e4; margin: 0 8px 0 7px; flex: none; }
.style { width: 88px; flex-direction: column; padding: 3px 1px 0; overflow: hidden; border: 2px solid transparent; gap: 7px; }
.style.sel { border-color: #d9dddd; }
.style span { width: 82px; overflow: hidden; font: 18px/24px "Open Sans", sans-serif; text-align: left; color: #111; }
.style .s0 { font-weight: 300; }
.style .s1 { font-weight: 700; }
.style .s3 { font-weight: 600; }
.style em { font-style: normal; }
.scroll { width: 19px; border-left: 1px solid #e8ecec; display: grid; grid-template-rows: repeat(3, 1fr); }
.scroll button + button { border-top: 1px solid #e8ecec; }
.scroll svg { stroke-width: 1; }
.big { flex-direction: row; padding: 0 14px 0 10px; gap: 14px; }
.big button { flex-direction: column; justify-content: flex-start; gap: 5px; padding-top: 3px; width: 73px; }
.big .narrow { width: 42px; }
.big span { display: flex; align-items: center; gap: 4px; }
.big + .big { padding: 0 13px 0 12px; }

/* document */
.canvas { flex: 1; min-height: 0; overflow: hidden; position: relative; display: grid; grid-template-columns: 381fr 429fr 429fr 429fr; grid-template-rows: 345px minmax(0, 1fr); gap: 9px 10px; padding-right: 30px; background: linear-gradient(to left, #f3f4f7 20px, #dadcdd 30px, #d5d7d6 31px); }
.page { position: relative; overflow: hidden; background: #fdfefd; padding: 0 51px 0 61px; display: flex; flex-direction: column; min-width: 0; }
.page.first { padding-left: 13px; }
.upper { justify-content: flex-end; padding-bottom: 51px; }
.lower { padding-top: 53px; }
.text { font: 500 8px/17px "Liberation Mono", "Noto Sans CJK SC", monospace; color: #0c0c0c; text-align: justify; text-align-last: justify; flex: none; }
.text p, .text h2, .text h3 { margin: 0; font: inherit; white-space: pre-line; }
.text .en { font-size: 7px; line-height: 8px; }
.text .in { text-indent: 17px; }
.text .tight { line-height: 11px; padding: 1px 0 3px; }
.text .end { display: block; text-indent: 0; text-align-last: left; }
.text [class*="w"].end { text-align-last: justify; }
.w24 { width: 24%; } .w34 { width: 34%; } .w39 { width: 39%; } .w43 { width: 43%; } .w45 { width: 45%; } .w57 { width: 57%; }
.w61 { width: 61%; } .w77 { width: 77%; } .w80 { width: 80%; } .w86 { width: 86%; } .w89 { width: 89%; } .w95 { width: 95%; }
.l54 { width: 54%; } .l78 { width: 78%; }
.text .one { text-align-last: left; }
.text .cap { text-indent: 17px; text-align-last: center; }
.text h2 { line-height: 16px; text-align-last: center; font-weight: 700; }
.text h3 { line-height: 16px; text-align-last: left; }
.push { padding-top: 49px; }
.foot { height: 21px; text-align: center; font: 6px/16px "Liberation Serif", serif; color: #999; flex: none; }
.foot.tall { height: 83px; padding-top: 62px; }
.foot.last { position: absolute; left: 61px; right: 51px; top: 533px; }
.mark { position: absolute; width: 13px; height: 13px; border: 0 solid #bfc1c1; }
.mark.b0 { bottom: 39px; border-top-width: 1px; }
.mark.t0 { top: 40px; border-bottom-width: 1px; }
.mark.l { left: 49px; border-right-width: 1px; }
.mark.r { right: 39px; border-left-width: 1px; }
.first .mark.l { left: 1px; }
.fig { stroke: none; }
.lbl { fill: #333; font-family: "Liberation Sans", "Noto Sans CJK SC", sans-serif; }
.l4 { font-size: 4px; }
.l6 { font-size: 6px; }
.cursor { display: inline-block; width: 1px; height: 9px; margin-right: -1px; background: #000; vertical-align: -1px; }
.pointer { position: absolute; left: 1245px; top: 736px; }

/* status bar */
.status { height: 39px; flex: none; display: flex; justify-content: space-between; align-items: center; background: #f3f5f7; border-top: 1px solid #e6e9ea; border-bottom: 1px solid #b9bdbf; overflow: hidden; font-family: "Open Sans", "Noto Sans CJK SC", sans-serif; white-space: nowrap; }
.left, .right { display: flex; align-items: center; flex: none; }
.status .bar { height: 24px; background: #e2e5e8; }
.sec { width: 65px; margin-left: -1px; }
.set { width: 120px; }
.ln { width: 49px; margin-left: 12px; }
.col { width: 58px; }
.cnt { width: 91px; margin-left: 10px; }
.left button { gap: 5px; margin-right: 11px; }
.left button .caret { margin-left: 2px; }
.left .bar + button { margin-left: 11px; }
.right { width: 473px; }
.v { width: 30px; height: 33px; margin-right: 4px; }
.right .bar { margin: 0 12px 0 7px; }
.pct { color: #5a5f64; gap: 8px; margin-left: 2px; width: 46px; }
.minus { width: 14px; height: 3px; background: #4f5459; margin: 0 16px; }
.zoom { width: 99px; overflow: hidden; }
.zoom input { appearance: none; display: block; width: 180px; height: 20px; margin: 0; background: linear-gradient(90deg, #6b7075 31px, #c3c7ca 31px) center / 100% 1px no-repeat; }
.zoom input::-webkit-slider-thumb { appearance: none; width: 18px; height: 18px; border-radius: 50%; border: 2px solid #7b8085; background: #f6f8f9; }
.taskbar { height: 10px; flex: none; background: #1b1f20; display: flex; }
.lite { width: 356px; background: #eeeff1; padding-left: 279px; }
.lite svg { stroke: none; }
.task { width: 66px; margin-left: 201px; background: #4b4f50; }
```
